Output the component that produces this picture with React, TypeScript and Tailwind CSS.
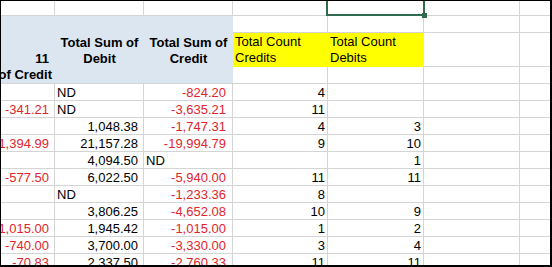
const rows: string[][] = [
  ['', 'ND', '-824.20', '4', ''],
  ['-341.21', 'ND', '-3,635.21', '11', ''],
  ['', '1,048.38', '-1,747.31', '4', '3'],
  ['-1,394.99', '21,157.28', '-19,994.79', '9', '10'],
  ['', '4,094.50', 'ND', '', '1'],
  ['-577.50', '6,022.50', '-5,940.00', '11', '11'],
  ['', 'ND', '-1,233.36', '8', ''],
  ['', '3,806.25', '-4,652.08', '10', '9'],
  ['-1,015.00', '1,945.42', '-1,015.00', '1', '2'],
  ['-740.00', '3,700.00', '-3,330.00', '3', '4'],
  ['-70.83', '2,337.50', '-2,760.33', '11', '11'],
];

const cell = 'border-r border-b border-[#d4d4d4] overflow-hidden flex items-end whitespace-nowrap leading-[15px]';
const lastCell = 'border-b border-[#d4d4d4]';
const pads = ['pr-[5px]', 'pr-[5px]', 'pr-[6px]', 'pr-[2px]', 'pr-[2px]'];

function Value({ v, col }: { v: string; col: number }) {
  if (v === 'ND') return <div className={`${cell} justify-start pl-[2px]`}>ND</div>;
  const red = v.startsWith('-');
  return (
    <div className={`${cell} justify-end ${pads[col]} ${red ? 'text-[#e0252d]' : 'text-black'}`}>
      <span className="shrink-0">{v}</span>
    </div>
  );
}

export default function App() {
  return (
    <div className="w-[552px] h-[267px] overflow-hidden bg-white border-t border-l border-r-2 border-b-2 border-black font-['Liberation_Sans',Arial,sans-serif] text-[13px] text-black">
      <div className="grid grid-cols-[54px_89px_89px_95px_96px_96px_1fr] grid-rows-[15px_17px_34px_17px_repeat(11,17px)]">
        {/* row A */}
        <div className={cell} />
        <div className={cell} />
        <div className={cell} />
        <div className={cell} />
        <div className={`${cell} relative overflow-visible z-10`}>
          <div className="absolute -left-[2px] -top-[3px] -right-[2px] -bottom-[1px] border-2 border-[#2f6b4c]" />
          <div className="absolute -right-[4px] -bottom-[3px] w-[5px] h-[5px] bg-[#2f6b4c]" />
        </div>
        <div className={cell} />
        <div className={lastCell} />

        {/* header block */}
        <div className="col-span-3 row-span-3 bg-[#dce6f1] border-b border-[#d4d4d4] grid grid-cols-[54px_89px_89px] font-bold leading-[16px]">
          <div className="flex flex-col items-end justify-end overflow-hidden whitespace-nowrap">
            <span className="pr-[6px]">11</span>
            <span className="pr-[3px] shrink-0">of Credit</span>
          </div>
          <div className="flex flex-col items-center justify-end pb-[16px]">
            <span>Total Sum of</span>
            <span>Debit</span>
          </div>
          <div className="flex flex-col items-center justify-end pb-[16px]">
            <span>Total Sum of</span>
            <span>Credit</span>
          </div>
        </div>
        {/* row B */}
        <div className={cell} />
        <div className={cell} />
        <div className={cell} />
        <div className={lastCell} />
        {/* row C */}
        <div className="bg-[#ffff00] border-r border-b border-[#ffff00] flex flex-col pt-[1px] pl-[2px] leading-[16px]">
          <span>Total Count</span>
          <span>Credits</span>
        </div>
        <div className="bg-[#ffff00] border-r border-b border-[#ffff00] flex flex-col pt-[1px] pl-[2px] leading-[16px]">
          <span>Total Count</span>
          <span>Debits</span>
        </div>
        <div className={cell} />
        <div className={lastCell} />
        {/* row D */}
        <div className={cell} />
        <div className={cell} />
        <div className={cell} />
        <div className={lastCell} />

        {rows.map((r, i) =>
          [
            ...r.map((v, c) => <Value key={`${i}-${c}`} v={v} col={c} />),
            <div key={`${i}-6`} className={cell} />,
            <div key={`${i}-7`} className={lastCell} />,
          ]
        )}
      </div>
    </div>
  );
}
